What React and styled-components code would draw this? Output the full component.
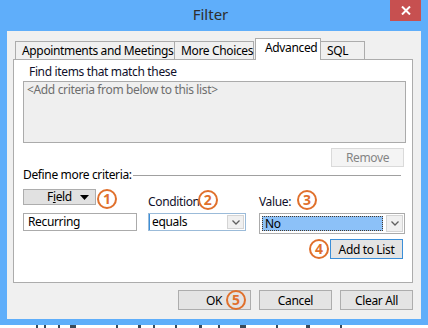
import React from "react";
import styled, { createGlobalStyle } from "styled-components";

const GlobalStyle = createGlobalStyle`
  html, body { margin:0; padding:0; width:428px; height:328px; overflow:hidden; background:#fff; }
  body { font-family: "Noto Sans", "Segoe UI", Arial, sans-serif; font-size:12px; letter-spacing:-0.35px; color:#000; }
  * { box-sizing:border-box; }
`;

const ORANGE = "#e0702c";

const Frame = styled.div`
  width:428px; height:325px; background:#5faefa; display:flex; flex-direction:column;
`;
const TitleBar = styled.div`
  height:31px; display:grid; grid-template-columns:1fr auto 1fr; padding-right:7px;
`;
const Title = styled.div`
  grid-column:2; line-height:29px; font-size:15px; color:#2e2e2e; letter-spacing:0;
`;
const CloseBtn = styled.div`
  grid-column:3; justify-self:end; width:31px; height:21px; background:#c75050;
  display:flex; align-items:center; justify-content:center;
`;
const Client = styled.div`
  margin:0 7px; height:288px; background:#f0f0f0; display:flex; flex-direction:column;
  padding:8px 8px 0 6px;
`;
const TabStrip = styled.div`
  display:flex; align-items:flex-end; height:21px; padding-left:2px; margin-bottom:-1px; position:relative; z-index:1;
`;
const Tab = styled.div`
  width:${p => p.$w}px; height:${p => (p.$active ? 22 : 19)}px;
  margin-left:${p => (p.$first ? 0 : p.$active ? 1 : -1)}px;
  background:${p => (p.$active ? "#fff" : "#f0f0f0")};
  border:1px solid #acacac; border-bottom:${p => (p.$active ? "none" : "1px solid #acacac")};
  padding:${p => (p.$active ? "1px 0 0 9px" : "1px 0 0 6px")};
  line-height:15px; white-space:nowrap;
`;
const Panel = styled.div`
  width:400px; height:224px; background:#fff; border:1px solid #acacac;
  display:flex; flex-direction:column; padding:4px 6px 0 9px;
`;
const GroupLabel = styled.div`
  padding-left:6px; line-height:15px; color:#10102a;
`;
const CriteriaList = styled.div`
  margin-top:2px; height:62px; background:#efefef; border:1px solid #ababab;
  padding:0 3px; color:#6e6e6e; line-height:15px;
`;
const ButtonRow = styled.div`
  display:flex; justify-content:flex-end; align-items:center; gap:${p => p.$gap || 0}px;
  margin-top:${p => p.$mt || 0}px; padding-right:${p => p.$pr || 0}px;
`;
const Button = styled.div`
  width:73px; height:${p => p.$h || 19}px; display:flex; align-items:center;
  justify-content:${p => (p.$end ? "flex-end" : "center")}; gap:4px;
  padding-right:${p => (p.$end ? 4 : 0)}px;
  background:${p => (p.$disabled ? "#f4f4f4" : "#e4e4e4")};
  border:1px solid ${p => (p.$disabled ? "#dadada" : p.$primary ? "#3c8fd8" : "#adadad")};
  color:${p => (p.$disabled ? "#848484" : "#000")}; line-height:15px;
`;
const DefineRow = styled.div`
  display:flex; align-items:center; gap:1px; margin-top:-1px; padding-right:5px;
  &::after { content:""; flex:1; height:1px; background:#a0a0a0; margin-top:1px; }
`;
const CriteriaGrid = styled.div`
  display:grid; grid-template-columns:125px 111px 146px; margin-top:6px;
`;
const HeadCell = styled.div`
  height:22px; display:flex; align-items:${p => (p.$top ? "flex-start" : "center")};
`;
const FieldButton = styled.div`
  width:73px; height:16px; background:#e1e1e1; border:1px solid #adadad;
  display:flex; align-items:center; padding:0 6px 0 23px; justify-content:space-between;
  line-height:14px;
`;
const Label = styled.span`
  line-height:15px; color:#10102a; margin-top:2px;
`;
const Badge = styled.div`
  width:20px; height:20px; border-radius:50%; border:2px solid ${ORANGE}; color:${ORANGE};
  background:${p => p.$bg || "#fff"}; margin-left:${p => p.$ml || 0}px;
  display:flex; align-items:center; justify-content:center; flex-shrink:0;
  font-weight:700; font-size:14px; letter-spacing:0; line-height:1; position:relative;
`;
const TextBox = styled.div`
  width:${p => p.$w}px; height:${p => p.$h || 18}px; border:1px solid ${p => p.$focus ? "#9bbbd9" : "#ababab"};
  background:#fff; display:flex; align-items:stretch; margin-top:2px;
`;
const BoxText = styled.div`
  flex:1; padding-left:${p => p.$pl || 4}px; line-height:16px;
  border-left:${p => (p.$caret ? "1px solid #3c8fd8" : "none")};
`;
const Highlight = styled.div`
  flex:1; margin:2px; background:#8cc1f8; border:1px dotted #4a3a2a;
  padding-left:2px; line-height:13px;
`;
const ArrowBox = styled.div`
  width:17px; margin:1px; background:#f0f0f0; border:1px solid #d4d4d4;
  display:flex; align-items:center; justify-content:center;
`;
const AddCell = styled.div`
  grid-column:3; display:flex; justify-content:flex-end; align-items:center; gap:1px;
  margin-top:5px; padding-right:2px;
`;
const BottomStrip = styled.div`
  height:3px; background:#fff; display:flex;
`;
const Mark = styled.div`
  width:${p => p.$w}px; margin-left:${p => p.$ml}px; background:${p => p.$c || "#3a4a5a"};
`;

const Chevron = () => (
  <svg width="8" height="5" viewBox="0 0 8 5">
    <polyline points="0.5,0.5 4,4 7.5,0.5" fill="none" stroke="#606060" strokeWidth="1.3" />
  </svg>
);

const marks = [
  [2, 36], [2, 6], [2, 12], [6, 10], [2, 40], [3, 20], [2, 12], [2, 20], [3, 22], [2, 16], [6, 20], [2, 30], [4, 28], [2, 30],
];

export default function App() {
  return (
    <>
      <GlobalStyle />
      <Frame>
        <TitleBar>
          <Title>Filter</Title>
          <CloseBtn>
            <svg width="10" height="9" viewBox="0 0 10 9">
              <path d="M1 0.5 L9 8.5 M9 0.5 L1 8.5" stroke="#fff" strokeWidth="2" />
            </svg>
          </CloseBtn>
        </TitleBar>
        <Client>
          <TabStrip>
            <Tab $first $w={160}>Appointments and Meetings</Tab>
            <Tab $w={80}>More Choices</Tab>
            <Tab $active $w={66}>Advanced</Tab>
            <Tab $w={45}>SQL</Tab>
          </TabStrip>
          <Panel>
            <GroupLabel>Find items that match these</GroupLabel>
            <CriteriaList>&lt;Add criteria from below to this list&gt;</CriteriaList>
            <ButtonRow $mt={5} $pr={2}>
              <Button $disabled>Remove</Button>
            </ButtonRow>
            <DefineRow>Define more criteria:</DefineRow>
            <CriteriaGrid>
              <HeadCell $top>
                <FieldButton>
                  <span>F<u>i</u>eld</span>
                  <svg width="9" height="5" viewBox="0 0 9 5"><polygon points="0,0 9,0 4.5,5" fill="#000" /></svg>
                </FieldButton>
                <Badge $ml={1}>1</Badge>
              </HeadCell>
              <HeadCell>
                <Label>Condition</Label>
                <Badge $ml={-2}>2</Badge>
              </HeadCell>
              <HeadCell>
                <Label>Value:</Label>
                <Badge $ml={6}>3</Badge>
              </HeadCell>
              <TextBox $w={114}><BoxText>Recurring</BoxText></TextBox>
              <TextBox $w={98} $focus><BoxText $pl={2} $caret>equals</BoxText><ArrowBox><Chevron /></ArrowBox></TextBox>
              <TextBox $w={146} $h={21}><Highlight>No</Highlight><ArrowBox><Chevron /></ArrowBox></TextBox>
              <AddCell>
                <Badge>4</Badge>
                <Button $primary $h={20}>Add to List</Button>
              </AddCell>
            </CriteriaGrid>
          </Panel>
          <ButtonRow $mt={7} $gap={8}>
            <Button $end $h={20}>OK<Badge $bg="transparent">5</Badge></Button>
            <Button $h={20}>Cancel</Button>
            <Button $h={20}>Clear All</Button>
          </ButtonRow>
        </Client>
      </Frame>
      <BottomStrip>
        {marks.map(([w, ml], i) => <Mark key={i} $w={w} $ml={ml} />)}
      </BottomStrip>
    </>
  );
}
